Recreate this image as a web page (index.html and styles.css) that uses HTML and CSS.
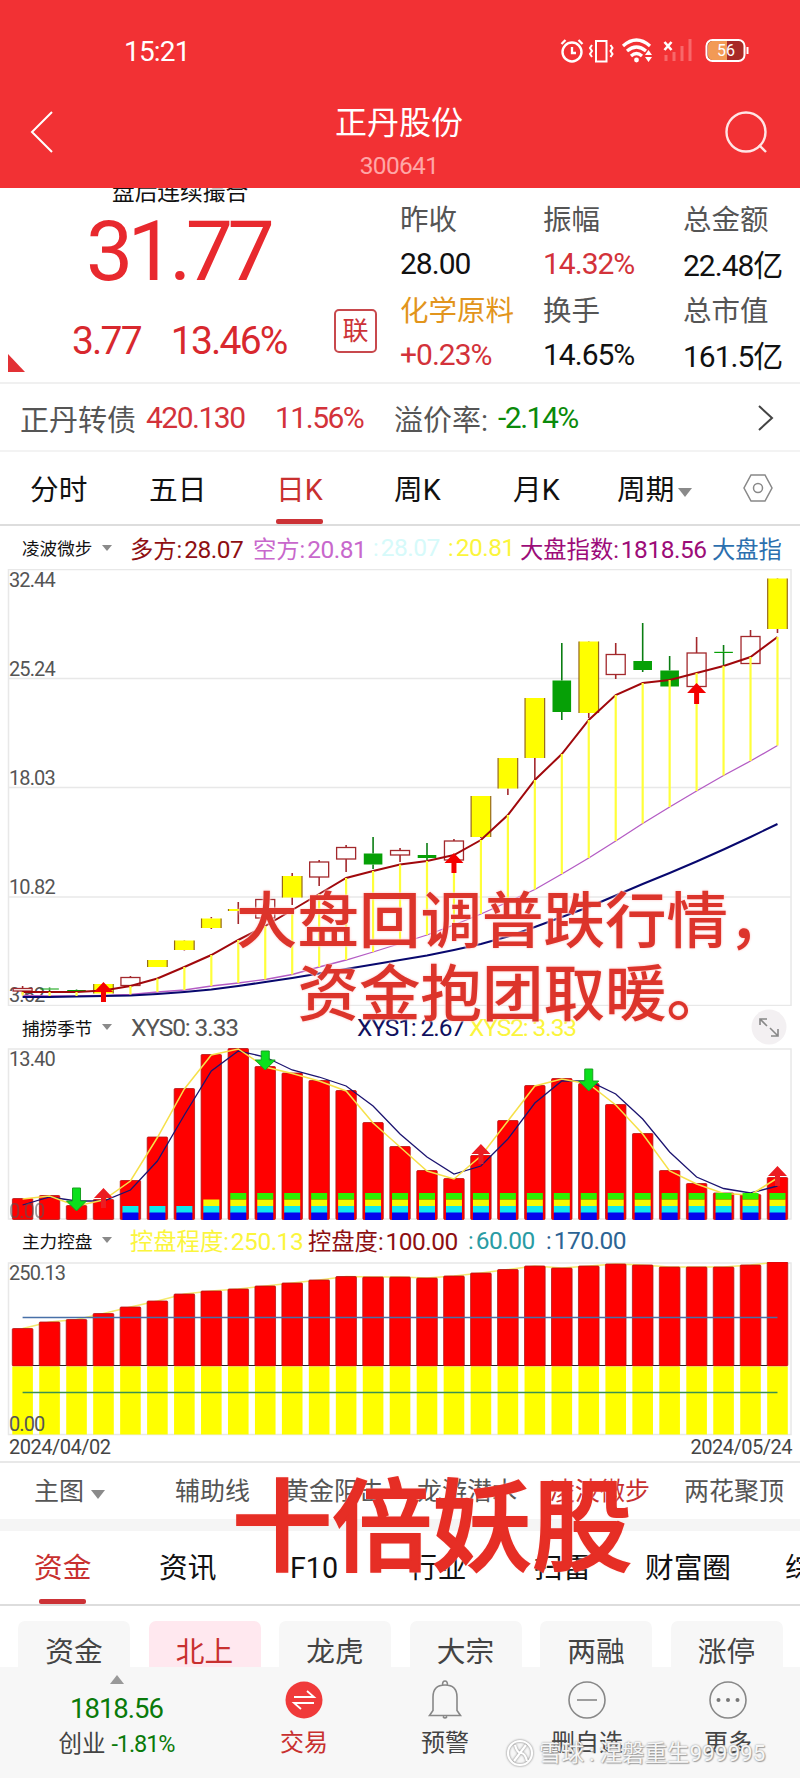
FILE: index.html
```html
<!DOCTYPE html>
<html lang="zh-CN">
<head>
  <meta charset="UTF-8">
  <meta name="viewport" content="width=device-width, initial-scale=1.0">
  <title>正丹股份 300641</title>
  <link rel="stylesheet" href="styles.css">
</head>
<body>
  <div class="screen">
    <!-- Header -->
    <header class="header">
      <div class="status-bar">
        <span class="clock">15:21</span>
        <svg class="status-icons" width="192" height="28" viewBox="0 0 192 28" fill="none" stroke="#fff" stroke-width="2">
          <circle cx="13" cy="15" r="9.500" stroke-width="2.400"/>
          <path d="M13 10v6h4M2.500 7l4-4M23.500 7l-4-4" stroke-width="2.300"/>
          <rect x="37" y="4" width="10.500" height="20.500"/>
          <path d="M33 8l-2 3 2 3-2 3 2 3M51.500 8l2 3-2 3 2 3-2 3" stroke-width="2"/>
          <path d="M64 9q13.500-12 27 0M68 14q9.500-8 19 0M72 19q5.500-5 11 0" stroke-width="3.200"/>
          <circle cx="77.500" cy="23" r="2.400" fill="#fff" stroke="none"/>
          <path d="M86 18l3.500-5 3.500 5zM86 20l3.500 5 3.500-5z" fill="#fff" stroke="none"/>
          <path d="M105.500 5l7 8M112.500 5l-7 8" stroke-width="2.600"/>
          <path d="M107 18v6M115 15v9M123 9v15M131 2v22" stroke="#f7686a" stroke-width="3"/>
          <rect x="147.500" y="3" width="38" height="21" rx="6" fill="#a82a26"/>
          <path d="M153 4h15v19h-15q-4-1-4-5v-9q0-4 4-5z" fill="#f29a55" stroke="none"/>
          <path d="M188.500 10v7"/>
          <text x="158" y="19" class="battery-text">56</text>
        </svg>
      </div>
      <div class="title-bar">
        <svg class="back" width="24" height="44" viewBox="0 0 24 44" fill="none" stroke="#fff" stroke-width="2"><path d="M22 2L2 22l20 20"/></svg>
        <div class="title">
          <h1>正丹股份</h1>
          <p>300641</p>
        </div>
        <svg class="search" width="44" height="44" viewBox="0 0 44 44" fill="none" stroke="#ffe5e5" stroke-width="2.400"><circle cx="22" cy="22" r="19.500"/><path d="M35 35l7 7"/></svg>
      </div>
    </header>

    <!-- Quote -->
    <section class="quote">
      <div class="price">
        <p class="phase">盘后连续撮合</p>
        <p class="last">31.77</p>
        <p class="change"><span>3.77</span><span>13.46%</span></p>
        <i class="corner"></i>
      </div>
      <span class="badge">联</span>
      <div class="stats">
        <span>昨收</span><span>振幅</span><span>总金额</span>
        <b>28.00</b><b class="red">14.32%</b><b>22.48亿</b>
        <span class="orange">化学原料</span><span>换手</span><span>总市值</span>
        <b class="red">+0.23%</b><b>14.65%</b><b>161.5亿</b>
      </div>
    </section>

    <!-- Convertible bond -->
    <div class="bond">
      <span>正丹转债</span>
      <b class="red">420.130</b>
      <b class="red">11.56%</b>
      <span>溢价率:</span>
      <b class="green">-2.14%</b>
      <svg width="18" height="28" viewBox="0 0 18 28" fill="none" stroke="#444" stroke-width="2"><path d="M2 2l13 12L2 26"/></svg>
    </div>

    <!-- Period tabs -->
    <nav class="periods">
      <span>分时</span>
      <span>五日</span>
      <span class="active">日K</span>
      <span>周K</span>
      <span>月K</span>
      <span>周期<i class="caret big"></i></span>
      <svg width="32" height="30" viewBox="0 0 32 30" fill="none" stroke="#888" stroke-width="1.500"><path d="M9 2h14l7 13-7 13H9L2 15z"/><circle cx="16" cy="15" r="4.500"/></svg>
    </nav>

    <!-- Charts -->
    <div class="legend main">
      <span class="name">凌波微步</span><i class="caret"></i>
      <span class="darkred">多方:<b>28.07</b></span>
      <span class="orchid">空方:<b>20.81</b></span>
      <span class="cyan">:<b>28.07</b></span>
      <span class="yellow">:<b>20.81</b></span>
      <span class="magenta">大盘指数:<b>1818.56</b></span>
      <span class="blue">大盘指</span>
    </div>
    <svg id="kline" class="chart" width="800" height="437" viewBox="0 569 800 437"></svg>
    <div class="legend xys">
      <span class="name">捕捞季节</span><i class="caret"></i>
      <span class="gray"><b>XYS0: 3.33</b></span>
      <span class="navy"><b>XYS1: 2.67</b></span>
      <span class="yellow"><b>XYS2: 3.33</b></span>
      <svg width="36" height="36" viewBox="0 0 36 36" fill="none" stroke="#888" stroke-width="1.600"><circle cx="18" cy="18" r="17.500" fill="#f3f0f2" stroke="none"/><path d="M9 16V10h7M9 10l7 7M19 19l8 8M27 20v7h-7"/></svg>
    </div>
    <svg id="season" class="chart" width="800" height="172" viewBox="0 1048 800 172"></svg>
    <div class="legend control">
      <span class="name">主力控盘</span><i class="caret"></i>
      <span class="yellow">控盘程度:<b>250.13</b></span>
      <span class="darkred">控盘度:<b>100.00</b></span>
      <span class="teal">:<b>60.00</b></span>
      <span class="steel">:<b>170.00</b></span>
    </div>
    <svg id="control" class="chart" width="800" height="174" viewBox="0 1262 800 174"></svg>
    <div class="dates"><span>2024/04/02</span><span>2024/05/24</span></div>

    <!-- Indicator picker -->
    <nav class="indicators">
      <span>主图<i class="caret big"></i></span>
      <span>辅助线</span>
      <span>黄金阻击</span>
      <span>龙游潜水</span>
      <span class="red">凌波微步</span>
      <span>两花聚顶</span>
    </nav>

    <!-- Info tabs -->
    <nav class="infos">
      <span class="active">资金</span>
      <span>资讯</span>
      <span>F10</span>
      <span>行业</span>
      <span>扫雷</span>
      <span>财富圈</span>
      <span>综合</span>
    </nav>
    <div class="chips">
      <span>资金</span>
      <span class="active">北上</span>
      <span>龙虎</span>
      <span>大宗</span>
      <span>两融</span>
      <span>涨停</span>
    </div>

    <!-- Bottom bar -->
    <footer class="footer">
      <div class="index">
        <i class="up"></i>
        <b class="value">1818.56</b>
        <p>创业 <b>-1.81%</b></p>
      </div>
      <div class="action trade">
        <svg width="40" height="40" viewBox="0 0 40 40" fill="none" stroke="#fff" stroke-width="1.800"><circle cx="20" cy="20" r="18.500" fill="#f03a3a" stroke="none"/><path d="M10 17h20l-7-6M30 23H10l7 6"/></svg>
        <span>交易</span>
      </div>
      <div class="action">
        <svg width="40" height="40" viewBox="0 0 40 40" fill="none" stroke="#888" stroke-width="1.600"><path d="M4.500 35.500h31l-3.500-5V17q0-12-12-12T8 17v13.500zM17.500 5q0-4 2.500-4t2.500 4M18 36.500q2 3 4 0"/></svg>
        <span>预警</span>
      </div>
      <div class="action">
        <svg width="40" height="40" viewBox="0 0 40 40" fill="none" stroke="#888" stroke-width="1.600"><circle cx="20" cy="20" r="18"/><path d="M10 20h20"/></svg>
        <span>删自选</span>
      </div>
      <div class="action">
        <svg width="40" height="40" viewBox="0 0 40 40" fill="none" stroke="#888" stroke-width="1.600"><circle cx="20" cy="20" r="18"/><g fill="#777" stroke="none"><circle cx="10.500" cy="20" r="2"/><circle cx="20" cy="20" r="2"/><circle cx="29.500" cy="20" r="2"/></g></svg>
        <span>更多</span>
      </div>
    </footer>

    <!-- Captions over the page -->
    <div class="caption mid">大盘回调普跌行情，<br>资金抱团取暖。</div>
    <div class="caption large">十倍妖股</div>
    <div class="watermark">
      <svg width="28" height="28" viewBox="0 0 28 28" fill="none" stroke="#fff" stroke-width="2.200"><circle cx="14" cy="14" r="12"/><path d="M9 6q2 8 6 8t6 8M20 6L8 22"/></svg>
      <span>雪球</span><span>:</span><span>涅磐重生999995</span>
    </div>
  </div>

  <script src="charts.js"></script>
</body>
</html>
```
FILE: styles.css
```css
/* Reset and base styles */
* {
  margin: 0;
  padding: 0;
  box-sizing: border-box;
}

body {
  width: 800px;
  font-family: Roboto, 'Noto Sans CJK SC', sans-serif;
  font-weight: 400;
  color: #111;
  background: #fff;
}

b {
  font-weight: 400;
}

.screen {
  position: relative;
  width: 800px;
  height: 1778px;
  overflow: hidden;
}

svg {
  display: block;
}

.red { color: #d3323a; }
.green { color: #0a8a0a; }
.orange { color: #e2951c; }
.darkred { color: #8e0f12; }
.orchid { color: #c868cc; }
.cyan { color: #d6fafa; }
.yellow { color: #fbf53c; }
.magenta { color: #9c0c78; }
.blue { color: #2c6fae; }
.navy { color: #10105e; }
.teal { color: #2a9ca4; }
.steel { color: #2c6494; }
.gray { color: #555; }

/* Header styles */
.header {
  height: 188px;
  background: #f23134;
  color: #fff;
  position: relative;
  z-index: 1;
}

.status-bar {
  display: flex;
  justify-content: space-between;
  align-items: center;
  height: 102px;
  padding: 0 49px 0 124px;
}

.clock {
  font-size: 28px;
  font-weight: 400;
  letter-spacing: -0.8px;
}

.status-icons {
  margin-top: -1px;
}

.battery-text {
  font-size: 16px;
  fill: #fff;
  stroke: none;
}

.title-bar {
  display: grid;
  grid-template-columns: 44px 1fr 44px;
  padding: 0 32px 0 30px;
}

.title {
  text-align: center;
}

.title h1 {
  font-size: 32px;
  line-height: 42px;
  font-weight: 400;
}

.title p {
  font-size: 24.500px;
  line-height: 30px;
  margin-top: 7px;
  letter-spacing: -0.7px;
  color: #ffa6a6;
}

.back,
.search {
  margin-top: 8px;
}

/* Quote styles */
.quote {
  display: flex;
  height: 196px;
  border-bottom: 2px solid #f0f0f0;
}

.price {
  position: relative;
  width: 334px;
  color: #e8292e;
}

.phase {
  margin: -12px 0 0 112px;
  font-size: 22.7px;
  line-height: 34px;
  color: #111;
}

.last {
  margin: 2px 0 0 86px;
  font-size: 84px;
  line-height: 80px;
  letter-spacing: -5.6px;
}

.change {
  display: flex;
  gap: 30px;
  margin: 26px 0 0 72px;
  font-size: 39px;
  line-height: 46px;
  letter-spacing: -1.8px;
  color: #d8282e;
}

.corner {
  position: absolute;
  left: 8px;
  top: 166px;
  border-right: 17px solid transparent;
  border-bottom: 18px solid #e23135;
}

.badge {
  width: 43px;
  height: 44px;
  margin: 121px 23px 0 0;
  border: 2px solid #c8494d;
  border-radius: 5px;
  color: #cc3338;
  font-size: 26px;
  line-height: 40px;
  text-align: center;
}

.stats {
  display: grid;
  grid-template-columns: 143px 140px 116px;
  grid-template-rows: repeat(4, 45.5px);
  padding-top: 7px;
  align-items: center;
  white-space: nowrap;
  font-size: 28.500px;
  color: #111;
}

.stats b {
  font-size: 30px;
  letter-spacing: -1px;
}

.stats span {
  color: #555;
}

.stats .orange {
  color: #e2951c;
}

.stats .red {
  color: #d3323a;
}

/* Bond row */
.bond {
  display: grid;
  grid-template-columns: 126px 129px 119px 104px 259px 20px;
  align-items: center;
  height: 68px;
  padding: 1px 0 0 20px;
  border-bottom: 2px solid #f3f3f3;
  font-size: 29px;
  white-space: nowrap;
  color: #555;
}

.bond b {
  font-size: 30px;
  letter-spacing: -1.5px;
}

/* Period tabs */
.periods {
  display: grid;
  grid-template-columns: 119px 127px 118px 119px 104px 125px 32px;
  height: 74px;
  padding-left: 30px;
  border-bottom: 2px solid #ddd;
  align-items: center;
  font-size: 28.700px;
  color: #111;
}

.periods span {
  position: relative;
  justify-self: start;
  height: 72px;
  line-height: 76px;
}

.active {
  color: #c8302f;
}

.periods .active::after,
.infos .active::after {
  content: '';
  position: absolute;
  left: 0;
  right: 0;
  bottom: 0;
  height: 5px;
  border-radius: 2px;
  background: #cc3236;
}

.caret {
  display: inline-block;
  justify-self: start;
  border: 5.5px solid transparent;
  border-top: 6px solid #8a8a8a;
  border-bottom: 0;
}

.caret.big {
  border-width: 9px 7.5px 0;
  margin-left: 4px;
  vertical-align: 3px;
}

/* Chart legends and charts */
.legend {
  display: grid;
  align-items: center;
  height: 43px;
  padding: 0 0 0 22px;
  overflow: hidden;
  white-space: nowrap;
  font-size: 23.300px;
}

.legend.main {
  grid-template-columns: 80px 28px 123px 120px 75px 72px 192px 80px;
}

.legend.xys {
  height: 42px;
  grid-template-columns: 80px 27px 226px 112px 284px 36px;
}

.legend.control {
  height: 42px;
  padding-bottom: 2px;
  grid-template-columns: 80px 28px 178px 160px 78px 90px;
}

.legend b {
  font-size: 24.500px;
  letter-spacing: -0.5px;
  margin-left: 2px;
}

.legend .name {
  font-size: 17.600px;
  color: #111;
}

.legend.xys b {
  letter-spacing: -1.1px;
}

.chart text {
  font-size: 20px;
  letter-spacing: -0.9px;
  fill: #555;
}

.dates {
  display: flex;
  justify-content: space-between;
  height: 25px;
  padding: 0 8px 0 9px;
  font-size: 20px;
  line-height: 22px;
  letter-spacing: -0.5px;
  color: #444;
}

/* Indicator picker */
.indicators {
  display: grid;
  grid-template-columns: 141px 109px 133px 133px 134px 116px;
  height: 70px;
  padding-left: 34px;
  border-top: 2px solid #e8e8e8;
  border-bottom: 12px solid #f5f5f5;
  line-height: 58px;
  font-size: 25px;
  white-space: nowrap;
  color: #555;
}

.indicators .caret {
  margin-left: 7px;
  vertical-align: 1px;
}

.indicators .red {
  color: #c8302f;
}

/* Info tabs */
.infos {
  display: grid;
  grid-template-columns: 125px 131px 119px 125px 111px 140px 57px;
  height: 75px;
  padding-left: 34px;
  border-bottom: 2px solid #ddd;
  font-size: 28.700px;
  line-height: 75px;
  white-space: nowrap;
}

.infos span {
  position: relative;
  justify-self: start;
  height: 73px;
}

.infos .active::after {
  left: 5px;
  right: 5px;
}

.chips {
  display: grid;
  grid-template-columns: repeat(6, 112px);
  gap: 18.500px;
  height: 61px;
  padding: 15px 0 0 18px;
  overflow: hidden;
}

.chips span {
  height: 62px;
  border-radius: 7px;
  background: #f7f7f7;
  font-size: 28.700px;
  line-height: 62px;
  text-align: center;
  color: #444;
}

.chips .active {
  background: #ffe8ef;
  color: #c8302f;
}

/* Bottom bar */
.footer {
  display: grid;
  grid-template-columns: 233px 142px 140px 144px 138px;
  height: 112px;
  background: #f7f7f7;
}

.index {
  display: flex;
  flex-direction: column;
  align-items: center;
  padding-top: 8px;
  font-size: 23.500px;
}

.index .up {
  border: 7px solid transparent;
  border-bottom: 9px solid #999;
  border-top: 0;
}

.index .value {
  margin-top: 8px;
  font-size: 27.500px;
  line-height: 34px;
  letter-spacing: -1px;
}

.index b {
  color: #0a7a0a;
  letter-spacing: -1.1px;
}

.index p {
  line-height: 36px;
  color: #444;
}

.action {
  display: flex;
  flex-direction: column;
  align-items: center;
  padding-top: 13px;
  font-size: 24px;
  line-height: 36px;
  gap: 5px;
  color: #444;
}

.trade {
  color: #c8302f;
}

/* Captions */
.caption {
  position: absolute;
  font-weight: 500;
  color: #dc342b;
  text-align: center;
  white-space: nowrap;
  text-shadow: 0 0 3px #ffd8d8, 0 0 2px #ffd8d8;
}

.mid {
  left: 236px;
  top: 886px;
  font-size: 61.500px;
  line-height: 73px;
}

.large {
  left: 232px;
  top: 1473px;
  font-size: 100px;
  line-height: 112px;
  color: #e62e25;
  -webkit-text-stroke: 2px #e62e25;
}

.watermark {
  position: absolute;
  left: 506px;
  top: 1737px;
  display: flex;
  align-items: center;
  gap: 5px;
  font-size: 22.500px;
  line-height: 32px;
  color: #f6f6f6;
  text-shadow: 0 0 2px #888, 1px 1px 1px #aaa;
}

.watermark svg {
  filter: drop-shadow(0 0 1px #777);
}
```
FILE: charts.js
```js
const STEP = 26.96;
const X0 = 22.6;
const px = i => X0 + i * STEP;

function rect(x, y, w, h, fill, extra = '') {
  return `<rect x="${x}" y="${y}" width="${w}" height="${h}" fill="${fill}" ${extra}/>`;
}

function line(x1, y1, x2, y2, color, width = 1) {
  return `<line x1="${x1}" y1="${y1}" x2="${x2}" y2="${y2}" stroke="${color}" stroke-width="${width}"/>`;
}

function curve(ys, color, width) {
  const pts = ys.map((y, i) => `${px(i)},${y}`).join(' ');
  return `<polyline points="${pts}" fill="none" stroke="${color}" stroke-width="${width}"/>`;
}

function label(text, y) {
  return `<text x="9" y="${y + 7}">${text}</text>`;
}

function frame(top, bottom) {
  return `<rect x="8.500" y="${top}" width="782.500" height="${bottom - top}" fill="none" stroke="#e8e8e8" stroke-width="1.500"/>`;
}

// arrows: y is the tip
function arrowUp(i, y, color, h = 20) {
  const x = px(i);
  return `<path d="M${x} ${y}l9.500 10h-7v${h - 10}h-5v-${h - 10}h-7z" fill="${color}"/>`;
}

function arrowDown(i, y, h = 21) {
  const x = px(i);
  return `<path d="M${x} ${y}l10-10h-6v-${h - 10}h-8v${h - 10}h-6z" fill="#0be01c" stroke="#18a020" stroke-width="1"/>`;
}

// K line: [kind, high, top, bottom, low]
const candles = [
  ['r', 986, 988.5, 991, 994], ['g', 987.5, 988.5, 989.5, 991], ['g', 989.5, 990, 992, 993],
  ['y', 984, 984, 993.5, 993.5], ['r', 976, 977.5, 985.5, 988], ['y', 960, 960, 967, 967],
  ['y', 940, 940.5, 950, 950.5], ['y', 917, 918.5, 928, 929], ['y', 902, 909, 911, 924],
  ['r', 899, 899.5, 918, 919], ['y', 873, 876, 897.5, 905], ['r', 860, 862, 877, 886],
  ['r', 845, 847.5, 859, 872], ['g', 837, 853.5, 864.5, 869], ['r', 848, 850.5, 855, 862],
  ['g', 843, 855, 858, 860], ['r', 839, 841, 860, 861], ['y', 796, 796, 837, 838],
  ['y', 758, 758, 788.5, 795], ['y', 698, 698, 758, 779], ['g', 643, 680.5, 712, 720],
  ['y', 641, 641.5, 713, 718], ['r', 643, 654.5, 674.5, 679], ['g', 623, 661, 670, 672],
  ['g', 656, 670.5, 686.5, 687], ['r', 637, 653, 686.5, 687], ['g', 645, 651.8, 653, 665],
  ['r', 630, 636.5, 663.5, 664], ['y', 578, 578.5, 629, 633]
];
const bull = [992, 992, 992, 990.5, 986, 978.5, 967, 955, 940, 926, 910, 894, 878, 871, 864.5,
  861, 855, 840, 815, 780, 754, 720, 695, 683, 680, 673, 666, 657, 637];
const bear = [995.5, 996, 996, 995.5, 994.5, 992, 990, 986, 983, 979.5, 974.5, 967, 960, 952, 943.5,
  935, 925, 914, 902, 889.5, 874, 858, 841, 823.5, 807, 791, 775.5, 761, 745.5];
const market = [997, 997, 996.5, 996, 995.5, 994, 992, 989.5, 986, 982, 978, 973.5, 969, 964.5, 960,
  955.5, 950, 944, 936.5, 927, 917, 907, 895.5, 884, 873, 861.5, 849.5, 837, 824];

let k = frame(569.5, 1005.5);
[678.5, 787.5, 897].forEach(y => { k += line(8, y, 791, y, '#e8e8e8', 1.5); });
k += label('32.44', 580) + label('25.24', 669) + label('18.03', 778) + label('10.82', 887) + label('3.62', 995);
candles.forEach(([kind, high, top, bottom, low], i) => {
  const x = px(i);
  const color = kind === 'g' ? '#0a7d12' : '#a3282c';
  k += line(x, high, x, top, color, 1.6) + line(x, bottom, x, low, color, 1.6);
  if (kind === 'r') k += rect(x - 9.5, top, 19, bottom - top, '#fff', 'stroke="#a3282c" stroke-width="1.300"');
  if (kind === 'g') k += rect(x - 9.3, top, 18.6, bottom - top, '#06a006');
  if (kind === 'y') {
    k += rect(x - 9.8, top, 19.6, bottom - top, '#ff0');
    k += line(x - 9.8, top, x - 9.8, bottom, '#96691c', 1.2) + line(x + 9.8, top, x + 9.8, bottom, '#96691c', 1.2);
  }
});
k += curve(bull, '#a0080c', 2) + curve(bear, '#b45cc4', 1.3) + curve(market, '#08086e', 2);
bull.forEach((y, i) => { k += line(px(i), y, px(i), bear[i], '#ffff3a', 2.2); });
k += arrowUp(3, 982, '#f40000') + arrowUp(16, 853, '#f40000') + arrowUp(25, 683, '#f40000', 21);
document.getElementById('kline').innerHTML = k;

// Season bars
const season = [1198, 1195, 1205, 1199, 1180, 1136.5, 1088, 1054, 1048, 1066, 1072.5, 1080, 1090, 1122, 1146,
  1170, 1178, 1155, 1120, 1085, 1078, 1083, 1104, 1133, 1170, 1183, 1192.5, 1194, 1177];
const slow = [1205, 1197, 1201, 1201, 1190, 1161, 1115, 1071, 1051, 1057, 1070, 1077, 1086, 1106, 1134,
  1157, 1174, 1166, 1139, 1103, 1081, 1081, 1094, 1119, 1152, 1177, 1188.5, 1193, 1186];

let s = frame(1049, 1219);
s += label('13.40', 1059);
season.forEach((y, i) => {
  s += rect(px(i) - 10.2, y + 0.5, 20.4, 1219 - y, '#f00', 'rx="1" stroke="#b41414" stroke-width="0.800"');
});
s += curve(slow, '#1c1470', 1.3) + curve(season.map(y => y + 1), '#f6e04a', 1.5);
season.forEach((y, i) => {
  const x = px(i) - 8;
  if (i > 3) s += rect(x, 1206, 16, 7, '#10e8ec') + rect(x, 1212.5, 16, 7.5, '#0404ee');
  if (i > 6) s += rect(x, 1199.5, 16, 6.5, '#f6fa00');
  if (i > 7) s += rect(x, 1193, 16, 6.5, '#2cf000');
});
s += '<text x="9" y="1218" opacity="0.6">0.00</text>';
s += arrowDown(2, 1211, 23) + arrowDown(9, 1070, 19) + arrowDown(21, 1091, 22);
s += arrowUp(3, 1188, '#ec1c22') + arrowUp(17, 1144, '#ec1c22') + arrowUp(28, 1166, '#ec1c22');
document.getElementById('season').innerHTML = s;

// Control bars
const degree = [1328.5, 1322, 1319.5, 1313.5, 1307, 1301, 1294, 1291, 1289, 1286, 1283, 1280, 1276.5, 1277, 1277,
  1278, 1276, 1273, 1269.5, 1266, 1268, 1266, 1264, 1265, 1267, 1267, 1267, 1265, 1262];

let c = frame(1263, 1434.5);
c += curve(degree, '#f4ea70', 1.5) + line(px(0), 1365.5, px(28), 1365.5, '#222', 1.2);
degree.forEach((y, i) => {
  const x = px(i) - 10.3;
  c += rect(x, y, 20.6, 1366 - y, '#f00', 'rx="1" stroke="#b41414" stroke-width="0.800"');
  c += rect(x, 1366.5, 20.6, 68, '#ff0');
});
c += line(px(0), 1317.5, px(28), 1317.5, '#4870a8', 1.4) + line(px(0), 1392.5, px(28), 1392.5, '#3a9050', 1.4);
c += label('250.13', 1273) + label('0.00', 1424);
document.getElementById('control').innerHTML = c;
```
